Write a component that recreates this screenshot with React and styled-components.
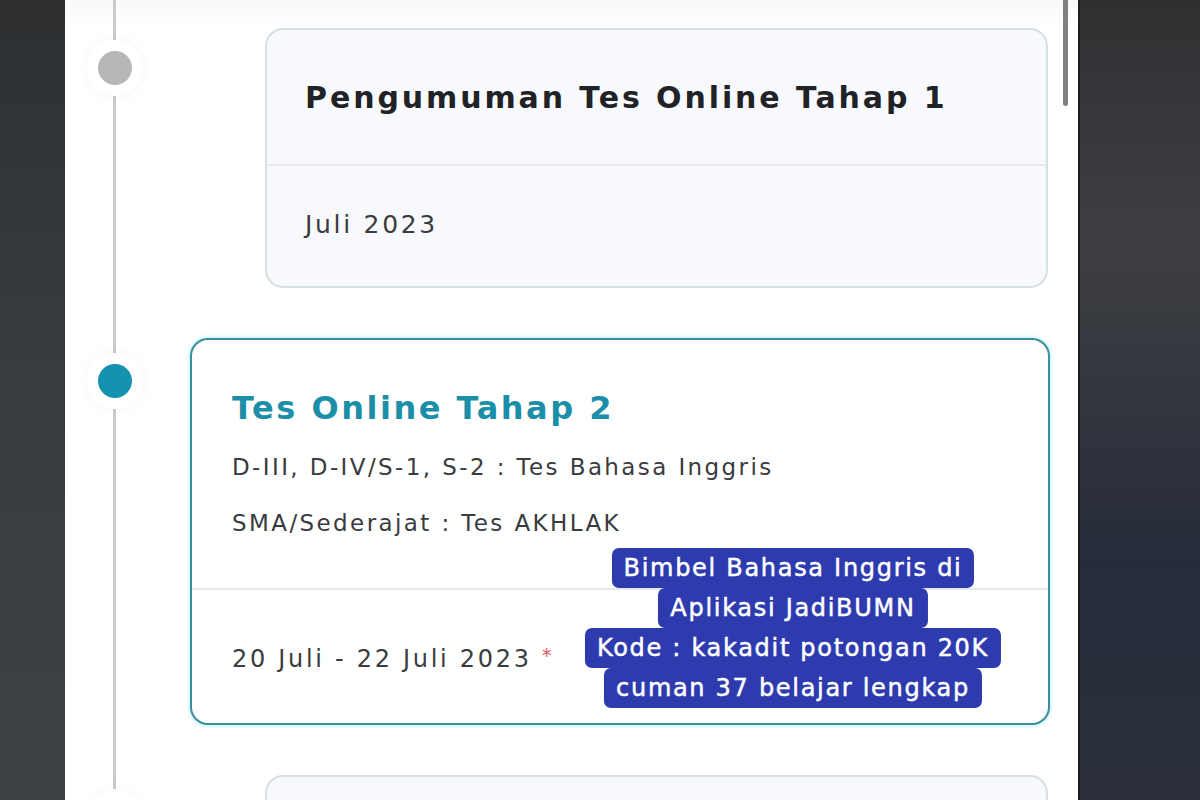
import React from "react";
import styled, { createGlobalStyle } from "styled-components";

const GlobalStyle = createGlobalStyle`
  html, body { margin: 0; padding: 0; }
  body { background: #2f3234; font-family: "DejaVu Sans", "Liberation Sans", sans-serif; }
  * { box-sizing: border-box; }
`;

const Page = styled.div`
  position: relative;
  display: flex;
  width: 1200px;
  height: 800px;
  overflow: hidden;
`;

const LeftGutter = styled.div`
  width: 65px;
  flex: none;
  background: linear-gradient(180deg, #2d2f31 0%, #393c3e 45%, #3e4244 100%);
`;

const RightGutter = styled.div`
  flex: 1;
  border-left: 2px solid #1c1d20;
  background: linear-gradient(180deg, #2f3032 0%, #3e3f42 30%, #262c3a 70%, #2b303c 100%);
`;

const Panel = styled.div`
  position: relative;
  width: 1013px;
  flex: none;
  background: linear-gradient(180deg, #fbf8f8 0px, #ffffff 24px);
  padding: 28px 28px 0 32px;
  overflow: hidden;
`;

const Scrollbar = styled.div`
  position: absolute;
  top: -6px;
  left: 998px;
  width: 5px;
  height: 112px;
  border-radius: 3px;
  background: #808080;
`;

const Timeline = styled.div`
  position: relative;
  display: flex;
  flex-direction: column;
  gap: 50px;
  &::before {
    content: "";
    position: absolute;
    left: 16px;
    top: -40px;
    bottom: -200px;
    width: 3px;
    background: #cbcbcd;
  }
`;

const Item = styled.div`
  position: relative;
  display: flex;
  align-items: flex-start;
`;

const Rail = styled.div`
  width: 36px;
  flex: none;
  display: flex;
  justify-content: center;
  padding-top: ${(p) => p.$offset}px;
`;

const Dot = styled.div`
  width: 34px;
  height: 34px;
  border-radius: 50%;
  background: ${(p) => (p.$active ? "#1592b0" : "#b7b7b9")};
  box-shadow: 0 0 0 11px #ffffff, 0 0 14px 12px rgba(0, 0, 0, 0.035);
`;

const Card = styled.div`
  flex: 1;
  margin-left: ${(p) => (p.$active ? 57 : 132)}px;
  margin-right: ${(p) => (p.$active ? 0 : 2)}px;
  border-radius: 18px;
  border: ${(p) => (p.$active ? "2.5px solid #3b8f99" : "2px solid #d4e0e3")};
  background: ${(p) => (p.$active ? "#ffffff" : "#f8f9fc")};
  box-shadow: ${(p) =>
    p.$active ? "0 0 3px 2px rgba(160, 238, 246, 0.45)" : "none"};
  overflow: hidden;
`;

const CardHead = styled.div`
  padding: ${(p) => p.$pad};
  min-height: 136px;
  border-bottom: 2px solid #e7e9ed;
`;

const CardFoot = styled.div`
  display: flex;
  align-items: center;
  padding: ${(p) => p.$pad};
`;

const Title = styled.h2`
  margin: 0;
  font-family: "DejaVu Sans", "Liberation Sans", sans-serif;
  font-weight: 700;
  font-size: ${(p) => (p.$active ? 32 : 30)}px;
  line-height: 44px;
  letter-spacing: ${(p) => (p.$active ? 2.5 : 2.9)}px;
  color: ${(p) => (p.$active ? "#1b8ea8" : "#1f2226")};
`;

const Body = styled.p`
  margin: ${(p) => p.$mt}px 0 0;
  font-size: 23px;
  line-height: 36px;
  color: #3a3b3e;
  letter-spacing: 2.4px;
`;

const DateText = styled.span`
  font-size: ${(p) => (p.$size || 25)}px;
  line-height: 42px;
  color: #3a3c40;
  letter-spacing: 2.7px;
`;

const Star = styled.sup`
  color: #e25a57;
  font-size: 20px;
  margin-left: 10px;
  position: relative;
  top: -4px;
`;

const Caption = styled.div`
  position: absolute;
  left: 793px;
  top: 548px;
  transform: translateX(-50%);
  display: flex;
  flex-direction: column;
  align-items: center;
`;

const CaptionLine = styled.span`
  display: block;
  white-space: nowrap;
  background: #2d3bae;
  color: #ffffff;
  font-family: "DejaVu Sans", "Liberation Sans", sans-serif;
  font-weight: 400;
  -webkit-text-stroke: 0.5px #ffffff;
  font-size: 24px;
  line-height: 40px;
  padding: 0 12px;
  border-radius: 7px;
  letter-spacing: 1.7px;
`;

export default function App() {
  return (
    <>
      <GlobalStyle />
      <Page>
        <LeftGutter />
        <Panel>
          <Scrollbar />
          <Timeline>
            <Item>
              <Rail $offset={23}>
                <Dot />
              </Rail>
              <Card>
                <CardHead $pad="46px 38px 44px">
                  <Title>Pengumuman Tes Online Tahap 1</Title>
                </CardHead>
                <CardFoot $pad="38px 38px 40px">
                  <DateText $size={25}>Juli 2023</DateText>
                </CardFoot>
              </Card>
            </Item>
            <Item>
              <Rail $offset={26}>
                <Dot $active />
              </Rail>
              <Card $active>
                <CardHead $pad="46px 40px 47px">
                  <Title $active>Tes Online Tahap 2</Title>
                  <Body $mt={19}>D-III, D-IV/S-1, S-2 : Tes Bahasa Inggris</Body>
                  <Body $mt={20}>SMA/Sederajat : Tes AKHLAK</Body>
                </CardHead>
                <CardFoot $pad="48px 40px 43px">
                  <DateText $size={24}>20 Juli - 22 Juli 2023</DateText>
                  <Star>*</Star>
                </CardFoot>
              </Card>
            </Item>
            <Item>
              <Rail $offset={25}>
                <Dot />
              </Rail>
              <Card>
                <CardHead $pad="46px 38px 44px" />
              </Card>
            </Item>
          </Timeline>
        </Panel>
        <RightGutter />
        <Caption>
          <CaptionLine>Bimbel Bahasa Inggris di</CaptionLine>
          <CaptionLine>Aplikasi JadiBUMN</CaptionLine>
          <CaptionLine>Kode : kakadit potongan 20K</CaptionLine>
          <CaptionLine>cuman 37 belajar lengkap</CaptionLine>
        </Caption>
      </Page>
    </>
  );
}
